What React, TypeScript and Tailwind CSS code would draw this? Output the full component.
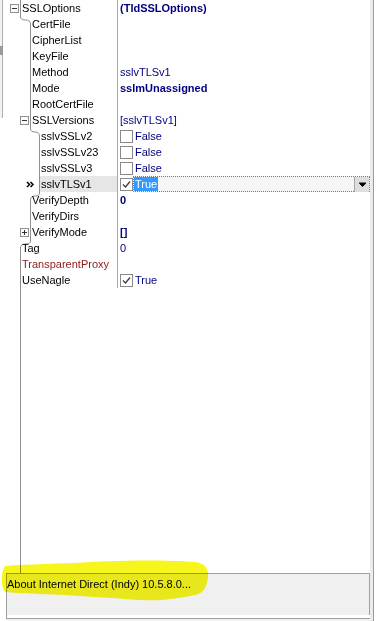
import type { ReactNode } from "react"

// pixel column of the tree line for each nesting level
const LINE_X = [20, 30, 39]

type Row = {
  name: string
  level: number
  box?: "minus" | "plus"
  value?: ReactNode
  red?: boolean
  selected?: boolean
}

function CheckBox({ checked }: { checked?: boolean }) {
  return (
    <svg width={13} height={13} className="shrink-0">
      <rect x={0.5} y={0.5} width={12} height={12} fill="white" stroke="#8a8a8a" />
      {checked && <path d="M3 6.5 L5.5 9 L10 3.5" fill="none" stroke="#3c3c3c" strokeWidth={1.3} />}
    </svg>
  )
}

function Bool({ checked }: { checked?: boolean }) {
  return (
    <div className="flex items-center gap-[2px]">
      <CheckBox checked={checked} />
      <span className="text-[#000080]">{checked ? "True" : "False"}</span>
    </div>
  )
}

const rows: Row[] = [
  { name: "SSLOptions", level: 0, box: "minus", value: <span className="font-bold text-[#000080]">(TIdSSLOptions)</span> },
  { name: "CertFile", level: 1 },
  { name: "CipherList", level: 1 },
  { name: "KeyFile", level: 1 },
  { name: "Method", level: 1, value: <span className="text-[#000080]">sslvTLSv1</span> },
  { name: "Mode", level: 1, value: <span className="font-bold text-[#000080]">sslmUnassigned</span> },
  { name: "RootCertFile", level: 1 },
  { name: "SSLVersions", level: 1, box: "minus", value: <span className="text-[#000080]">[sslvTLSv1]</span> },
  { name: "sslvSSLv2", level: 2, value: <Bool /> },
  { name: "sslvSSLv23", level: 2, value: <Bool /> },
  { name: "sslvSSLv3", level: 2, value: <Bool /> },
  { name: "sslvTLSv1", level: 2, selected: true },
  { name: "VerifyDepth", level: 1, value: <span className="font-bold text-[#000080]">0</span> },
  { name: "VerifyDirs", level: 1 },
  { name: "VerifyMode", level: 1, box: "plus", value: <span className="font-bold text-[#000080]">[]</span> },
  { name: "Tag", level: 0, value: <span className="text-[#000080]">0</span> },
  { name: "TransparentProxy", level: 0, red: true },
  { name: "UseNagle", level: 0, value: <Bool checked /> },
]

function Gutter({ level, prev, box, selected }: { level: number; prev: number; box?: "minus" | "plus"; selected?: boolean }) {
  const x = LINE_X[level] + 0.5
  const px = LINE_X[prev] + 0.5
  const d = prev === level ? `M${x} 0V16` : `M${px} 0V1Q${px} 4 ${(px + x) / 2} 4Q${x} 4 ${x} 8V16`
  const bx = LINE_X[level] - 10
  return (
    <svg width={LINE_X[level] + 1} height={16} className="shrink-0 overflow-visible">
      <path d={d} fill="none" stroke="#8f8f8f" />
      {box && (
        <g>
          <rect x={bx + 0.5} y={4.5} width={8} height={8} fill="#fbfbfb" stroke="#909090" />
          <path d={`M${bx + 2} 8.5h5`} stroke="#333" />
          {box === "plus" && <path d={`M${bx + 4.5} 6v5`} stroke="#333" />}
        </g>
      )}
      {selected && (
        <path d="M27 6l2.5 2.5 -2.5 2.5M30.5 6l2.5 2.5 -2.5 2.5" fill="none" stroke="#000" strokeWidth={1.5} />
      )}
    </svg>
  )
}

function Editor() {
  return (
    <div className="flex items-center h-4 flex-1">
      <CheckBox checked />
      <div className="flex-1 h-4 flex items-center border border-dotted border-[#7a7a7a] bg-[#f6f6f6]">
        <span className="bg-[#3399ff] text-white leading-[14px] px-[1px]">True</span>
        <div className="ml-auto w-[15px] h-[15px] bg-[#dedede] border-l border-[#a8a8a8] flex items-center justify-center">
          <svg width={7} height={5}>
            <path d="M0 0h7M0.5 1.5h6L3.5 4.5z" fill="#000" stroke="#000" strokeWidth={1} />
          </svg>
        </div>
      </div>
    </div>
  )
}

export default function App() {
  return (
    <div className="relative w-[386px] h-[621px] overflow-hidden bg-white flex font-['Liberation_Sans',sans-serif] text-[11px] text-black">
      <div className="w-[370px] flex flex-col">
        <div>
          {rows.map((row, i) => (
            <div key={row.name} className="flex h-4 leading-4">
              <div className="w-[118px] flex border-r border-[#a8a8a8]">
                <Gutter level={row.level} prev={i === 0 ? 0 : rows[i - 1].level} box={row.box} selected={row.selected} />
                <div className={`flex-1 pl-[1px] whitespace-nowrap ${row.selected ? "bg-[#e6e6e6]" : ""} ${row.red ? "text-[#8b1a1a]" : ""}`}>
                  {row.name}
                </div>
              </div>
              <div className="flex-1 flex items-center pl-[2px] whitespace-nowrap">
                {row.selected ? <Editor /> : row.value}
              </div>
            </div>
          ))}
        </div>
        <div className="flex-1 ml-[20px] border-l border-[#8f8f8f]" />
        <div className="ml-[6px] h-[42px] border border-b-0 border-[#a0a0a0] bg-[#f0f0f0] pt-[3px] leading-[14px] whitespace-nowrap">
          About Internet Direct (Indy) 10.5.8.0...
        </div>
        <div className="ml-[6px] h-[3px] border-l border-[#a0a0a0]" />
        <div className="ml-[6px] h-[3px] border-t border-[#a0a0a0] bg-[#f0f0f0]" />
      </div>
      <div className="w-[4px] bg-[#ececec] border-r border-[#9a9a9a]" />
      <div className="flex-1" />

      {/* edge of the neighbouring window */}
      <div className="absolute left-0 top-0 w-[3px] h-[118px] bg-[#f2f2f2] border-r border-[#b0b0b0]" />
      <div className="absolute left-0 top-[46px] w-[3px] h-[9px] bg-[#9a9a9a]" />

      {/* highlighter mark */}
      <svg width={215} height={50} className="absolute left-0 top-[555px] mix-blend-multiply pointer-events-none">
        <path
          d="M5 11C30 9 60 9 90 7C130 5 170 5 195 7C205 8 209 14 208 22C207 30 205 38 195 40C175 44 160 46 140 45C110 43 70 40 40 39C20 38 6 38 4 36C1 30 1 16 5 11Z"
          fill="#f6f61c"
        />
      </svg>
    </div>
  )
}
